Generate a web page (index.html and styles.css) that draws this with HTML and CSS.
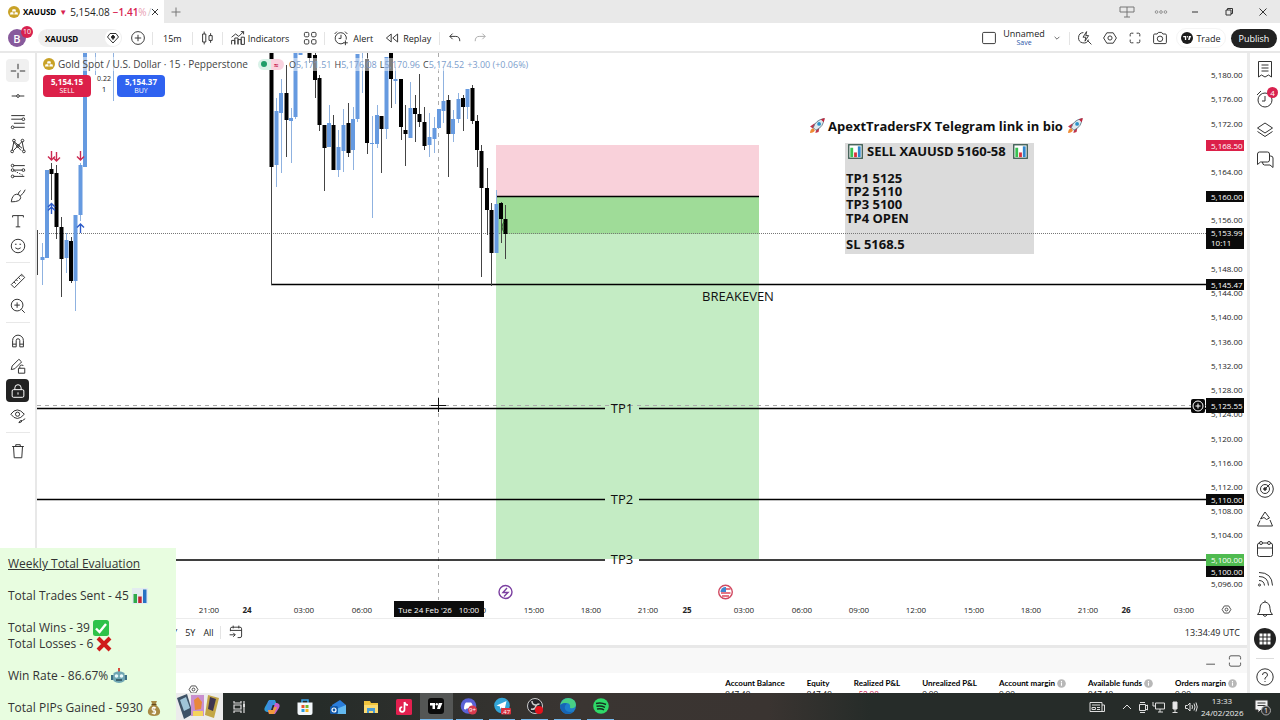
FILE: index.html
```html
<!DOCTYPE html>
<html lang="en">
<head>
<meta charset="utf-8">
<title>XAUUSD 5,154.08</title>
<link rel="stylesheet" href="styles.css">
</head>
<body>
<svg class="defs" aria-hidden="true">
  <defs>
    <symbol id="gold" viewBox="0 0 12 12"><circle cx="6" cy="6" r="6" fill="#c9a227"/><path d="M4.6 3.2h2.8l.7 2.2H3.9zM2.6 6.2h2.6l.6 2.2H1.9zM6.8 6.2h2.6l.7 2.2H6.200z" fill="#fff"/></symbol>
    <symbol id="gear" viewBox="0 0 20 20"><path d="M6 3.500h8l4 6.500-4 6.500H6L2 10z"/><circle cx="10" cy="10" r="2.600"/></symbol>
    <symbol id="full" viewBox="0 0 20 20"><path d="M4 8V5.500Q4 4 5.500 4H8M12 4h2.500Q16 4 16 5.500V8M16 12v2.500q0 1.500-1.500 1.500H12M8 16H5.500Q4 16 4 14.500V12"/></symbol>
    <symbol id="rocket" viewBox="0 0 16 16"><path d="M1 9l4-3 2 1-3 4zM10 9l-1 5-3 1 1-4z" fill="#c2334b"/><path d="M4 10Q6 3 14 1.500 14 9 6.500 12.500z" fill="#dfe9ef" stroke="#54707f" stroke-width=".8"/><path d="M11 2.200L15 1l-1.200 4z" fill="#c2253c"/><circle cx="9.500" cy="6.500" r="1.800" fill="#2b92c9"/><path d="M1 15q0-4 3-4.500l1.500 2Q4.500 15 1 15z" fill="#ef8a32"/></symbol>
    <symbol id="bars" viewBox="0 0 16 16"><rect x=".8" y=".8" width="14.400" height="14.400" fill="#fff" stroke="#3a5a50" stroke-width="1.400"/><path d="M2.500 4h3v10h-3z" fill="#39c253"/><path d="M6.500 9h3v5h-3z" fill="#d9323c"/><path d="M10.500 2.500h3V14h-3z" fill="#2f86cd"/></symbol>
    <symbol id="info" viewBox="0 0 10 10"><circle cx="5" cy="5" r="4.800" fill="#b8b8b8"/><path d="M4.400 4.300h1.200v3.200H4.400zM4.400 2.300h1.200v1.200H4.400z" fill="#fff"/></symbol>
  </defs>
</svg>
<div class="app">
  <header class="tabs">
    <div class="tab">
      <svg class="s12"><use href="#gold"/></svg>
      <b>XAUUSD</b><span class="down">▼</span><span>5,154.08</span><span class="pct">−1.41<i>%</i></span><span class="slash">/</span>
      <button class="x" aria-label="Close tab"><svg viewBox="0 0 8 8"><path d="M1 1l6 6M7 1L1 7"/></svg></button>
    </div>
    <button class="newtab" aria-label="New tab"><svg viewBox="0 0 10 10"><path d="M5 .5v9M.5 5h9"/></svg></button>
    <div class="win">
      <button aria-label="Layout"><svg viewBox="0 0 18 14"><path d="M2 2h14v5H2zM9 2v10M6 12h6" stroke="#777"/></svg></button>
      <button class="more" aria-label="More"><svg viewBox="0 0 18 14"><circle cx="4" cy="7" r="1.500"/><circle cx="9" cy="7" r="1.500"/><circle cx="14" cy="7" r="1.500"/></svg></button>
      <button aria-label="Minimize"><svg viewBox="0 0 18 14"><path d="M6 7h6"/></svg></button>
      <button aria-label="Restore"><svg viewBox="0 0 18 14"><path d="M6 5h5v5H6zM7.500 5V3.500h5v5H11"/></svg></button>
      <button aria-label="Close"><svg viewBox="0 0 18 14"><path d="M5.500 3.500l7 7M12.500 3.500l-7 7"/></svg></button>
    </div>
  </header>

  <nav class="toolbar">
    <button class="avatar" aria-label="Profile">B<em>10</em></button>
    <button class="symbol"><b>XAUUSD</b><span class="gem"><svg viewBox="0 0 16 16"><path d="M5 3.500h6L13.500 7 8 13 2.500 7z"/><path d="M8 5l1.800 2L8 9.500 6.200 7z" fill="#222"/></svg></span></button>
    <button class="ib" aria-label="Compare"><svg viewBox="0 0 20 20"><circle cx="10" cy="10" r="8"/><path d="M10 6v8M6 10h8"/></svg></button>
    <i class="vs"></i>
    <button class="tx">15m</button>
    <i class="vs"></i>
    <button class="ib" aria-label="Candles"><svg viewBox="0 0 20 20"><path d="M4.500 5h4v10h-4zM6.500 2v3M6.500 15v3M12.500 7h4v6h-4zM14.500 4v3M14.500 13v3"/></svg></button>
    <i class="vs"></i>
    <button class="tx wide"><svg viewBox="0 0 20 20"><path d="M2 9l5-4 4 3 6-6M13.500 2H17v3.500M2 18v-5h4v5M6 18v-8h4v8M10 18v-6h4v6M14 18V9h4v9z"/></svg>Indicators</button>
    <button class="ib" aria-label="Templates"><svg viewBox="0 0 20 20"><rect x="3" y="3" width="5.500" height="5.500" rx="1.500"/><rect x="12" y="3" width="5.500" height="5.500" rx="1.500"/><rect x="3" y="12" width="5.500" height="5.500" rx="1.500"/><rect x="12" y="12" width="5.500" height="5.500" rx="1.500"/></svg></button>
    <i class="vs"></i>
    <button class="tx alert"><svg viewBox="0 0 20 20"><path d="M13 16.500A7 7 0 1 1 16.500 12M10 6v4.500H7M2 5l3-3M15 2l3 3M15.500 13v6M12.500 16h6"/></svg>Alert</button>
    <button class="tx replay"><svg viewBox="0 0 20 20"><path d="M9 5L3 10l6 5zM17 5l-6 5 6 5z"/></svg>Replay</button>
    <i class="vs"></i>
    <button class="ib" aria-label="Undo"><svg viewBox="0 0 20 20"><path d="M7 4.500L3.500 8 7 11.500M3.500 8H11q5 0 5 6"/></svg></button>
    <button class="ib dim" aria-label="Redo"><svg viewBox="0 0 20 20"><path d="M13 4.500L16.500 8 13 11.500M16.500 8H9q-5 0-5 6"/></svg></button>
    <span class="grow"></span>
    <button class="ib" aria-label="Layout setup"><svg viewBox="0 0 20 20"><rect x="2" y="3" width="16" height="14" rx="1.500"/></svg></button>
    <button class="layout"><span>Unnamed</span><small>Save</small></button>
    <button class="ib caret" aria-label="Layouts"><svg viewBox="0 0 20 20"><path d="M6 8l4 4 4-4"/></svg></button>
    <i class="vs"></i>
    <button class="ib" aria-label="Quick search"><svg viewBox="0 0 20 20"><path d="M8 3.200A6.500 6.500 0 1 0 14.500 12M13 13l5 5M12 2L7.500 9H11l-1 5 4.500-7H11z"/></svg></button>
    <button class="ib" aria-label="Settings"><svg><use href="#gear"/></svg></button>
    <button class="ib" aria-label="Fullscreen"><svg><use href="#full"/></svg></button>
    <button class="ib" aria-label="Snapshot"><svg viewBox="0 0 20 20"><path d="M3.500 5h3L8 3h4l1.500 2h3q1.500 0 1.500 1.500v9q0 1.500-1.500 1.500h-13Q2 17 2 15.500v-9Q2 5 3.500 5z"/><circle cx="10" cy="11" r="3.400"/></svg></button>
    <button class="trade"><svg viewBox="0 0 12 12"><circle cx="6" cy="6" r="6" fill="#1c1c1c"/><path d="M2.200 4h3v4H3.900V5.300H2.200zM8 4h2.200L8.600 8H7.100z" fill="#fff"/><circle cx="6.500" cy="4.700" r=".7" fill="#fff"/></svg>Trade</button>
    <button class="publish">Publish</button>
  </nav>

  <div class="body">
    <aside class="tools">
      <button class="on" aria-label="Cross"><svg viewBox="0 0 20 20"><path d="M10 2v6M10 12v6M2 10h6M12 10h6"/></svg></button>
      <button aria-label="Trend line"><svg viewBox="0 0 20 20"><path d="M3 10h5.500M11.500 10H17"/><circle cx="10" cy="10" r="1.500"/></svg></button>
      <button aria-label="Fib"><svg viewBox="0 0 20 20"><path d="M2.500 4h15M2.500 8h12M5.500 12.500h12M5.500 17h12"/><circle cx="16" cy="8" r="1.500"/><circle cx="4" cy="17" r="1.500"/></svg></button>
      <button aria-label="Patterns"><svg viewBox="0 0 20 20"><path d="M3.500 15L5.500 5l9 7.500M5 15l9.500-10 2 10M5.500 6l8 9"/><circle cx="3.500" cy="16" r="1.500"/><circle cx="5.500" cy="4" r="1.500"/><circle cx="10" cy="10" r="1.500"/><circle cx="15" cy="4" r="1.500"/><circle cx="16.500" cy="16" r="1.500"/></svg></button>
      <button aria-label="Forecast"><svg viewBox="0 0 20 20"><path d="M5 4h12.500M5 9h10M5 16h12"/><path d="M6 10l10 5" stroke-dasharray="1.500 1.500"/><circle cx="4" cy="4" r="1.500"/><circle cx="4" cy="9" r="1.500"/><circle cx="16" cy="9" r="1.500"/><circle cx="4" cy="16" r="1.500"/></svg></button>
      <button aria-label="Brush"><svg viewBox="0 0 20 20"><path d="M2.500 16.500q1-8 6-8.500 4 0 4.500 3.500 0 5-10.500 5zM10 8q1-3 3-4M12.500 10q4-3 5.500-7"/></svg></button>
      <button aria-label="Text"><svg viewBox="0 0 20 20"><path d="M4 6V4h12v2M10 4v12.500M7.500 16.500h5"/></svg></button>
      <button aria-label="Emoji"><svg viewBox="0 0 20 20"><circle cx="10" cy="10" r="7.500"/><path d="M7 12q3 3 6 0"/><path d="M7.500 7.500v1M12.500 7.500v1" stroke-width="1.800"/></svg></button>
      <i></i>
      <button aria-label="Measure"><svg viewBox="0 0 20 20"><path d="M2.500 14L14 2.500l3.500 3.500L6 17.500zM5.500 11l2 2M8 8.500l1.500 1.500M10.500 6l2 2M13 3.500l1.500 1.500"/></svg></button>
      <button aria-label="Zoom in"><svg viewBox="0 0 20 20"><circle cx="9" cy="9" r="6.500"/><path d="M14 14l3.500 3.500M9 6v6M6 9h6"/></svg></button>
      <i></i>
      <button aria-label="Magnet"><svg viewBox="0 0 20 20"><path d="M4 16.500V9.500a6 6 0 0 1 12 0v7h-4V9.500a2 2 0 0 0-4 0v7zM4 13.500h4M12 13.500h4"/></svg></button>
      <button aria-label="Stay in drawing mode"><svg viewBox="0 0 20 20"><path d="M2.500 14l1-4L11 2.500 14 5.500 6.500 13zM10.500 12.500h7V18h-7zM12 12.500v-2q0-1.500 2-1.500t2 1"/></svg></button>
      <button class="lock" aria-label="Lock drawings"><svg viewBox="0 0 20 20"><rect x="3.500" y="8.500" width="13" height="8.500" rx="1.500"/><path d="M6.500 8.500V6.500a3.500 3.500 0 0 1 7 0v2M10 11.500v2.500"/></svg></button>
      <button aria-label="Hide drawings"><svg viewBox="0 0 20 20"><path d="M2 8q7-9.500 15 0-8 9.500-15 0z"/><circle cx="9.500" cy="8" r="2.300"/><path d="M11 17.500q1-3 3.500-2.500 0 2-3.500 2.500zM15 15l3-2"/></svg></button>
      <i></i>
      <button aria-label="Remove"><svg viewBox="0 0 20 20"><path d="M3.500 5h13M7.500 5V3h5v2M5 5l.8 12.500h8.400L15 5"/></svg></button>
    </aside>

    <main class="center">
      <section class="chart">
        <div class="plot">
          <svg class="canvas">
            <g transform="translate(-37 -53)">
              <g class="area">
                <path fill="#f9d1da" d="M496 145h263v52H496z"/>
                <path fill="#9fdc98" d="M496 197h263v37H496z"/>
                <path fill="#c4ecc4" d="M496 234h263v325H496z"/>
                <path fill="#dbdbdb" d="M845 143h189v111H845z"/>
              </g>
              <path class="hair" d="M438.500 53V600M37 405.500H4000"/>
              <path class="dot" d="M37 233.500H4000"/>
              <path class="lvl" d="M271 284.500H4000M37 408.500H605M639 408.500H4000M37 499.500H605M639 499.500H4000M37 560H605M639 560H4000M496 196.500H759"/>
              <path class="bw" d="M42.500 243V285M66.500 233V273M75.500 215V311M80.500 163V221M95.500 53V75M113.500 53V101M276.500 98V187M281.500 79V173M291.500 108V163M295.500 53V119M329.500 105V147M338.500 130V177M343.500 109V172M353.500 107V170M357.500 54V122M362.500 53V93M372.500 116V218M377.500 105V148M386.500 57V139M395.500 67V104M410.500 82V138M429.500 113V157M434.500 117V153M443.500 67V123M453.500 110V142M458.500 93V123M467.500 89V119M496.500 190V253"/>
              <path class="bb" d="M42.500 257V260M47 170V258M66.500 240V258M75.500 215V281M80.500 165V215M85 53V167M276.500 111V165M281 93V113M291 118V121M295.500 53V117M300.500 53V55M329 123V147M338.500 147V170M343.500 125V151M353 119V150M357.500 54V119M372 143V144M377 115V144M386.500 57V129M395.500 79V81M410.500 108V138M429.500 137V145M434.500 128V139M439 109V128M443.500 101V111M453 119V134M458.500 99V119M467.500 89V107M496.500 204V253"/>
              <path class="kw" d="M37.500 230V275M51.500 163V200M56.500 165V239M61.500 217V297M71.500 237V283M271.500 53V285M286.500 65V157M309.500 53V63M315.500 53V98M319.500 75V131M324.500 125V191M333.500 115V170M348.500 103V157M367.500 53V154M381.500 116V173M391.500 53V108M401.500 79V140M405.500 105V166M415.500 95V142M419.500 74V127M424.500 107V150M448.500 95V177M463.500 95V131M472.500 85V124M477.500 115V167M481.500 145V277M487.500 168V235M491.500 203V286M501.500 202V243M505.500 205V259"/>
              <path class="kb" d="M51.500 169V174M56.500 173V227M61.500 227V259M71 241V281M271.500 53V167M286.500 93V120M309.500 53V58M315 55V80M319.500 78V125M324.500 125V148M333.500 125V170M348.500 123V153M367 59V143M381.500 116V129M391 53V79M401 79V127M405.500 130V134M415 108V114M419.500 114V122M424.500 122V146M448.500 100V134M463 98V107M472.500 88V121M477 121V150M481.500 151V188M487 188V210M491.500 210V253M501 203V219M505.500 219V234"/>
              <path class="red" d="M51.500 151v9M48 156.500l3.500 3.500 3.500-3.500M56.500 152v9M53 157.500l3.500 3.500 3.500-3.500M80.500 151v9M77 156.500l3.500 3.500 3.500-3.500"/>
              <path class="blue" d="M51.500 214v-10M48 207l3.500-3.500L55 207M48 210.500l3.500-3.500 3.500 3.500M80.500 233v-9M77 227.500l3.500-3.500 3.500 3.500"/>
              <path class="green" d="M504 222q-4 5 0 10"/>
              <path class="cross" d="M438.500 398v14M431 405.500h15"/>
              <g class="note">
                <svg x="809" y="117" width="17" height="17"><use href="#rocket"/></svg>
                <text x="828" y="131">ApextTradersFX Telegram link in bio</text>
                <svg x="1067" y="117" width="17" height="17"><use href="#rocket"/></svg>
                <svg x="848" y="144" width="15" height="15"><use href="#bars"/></svg>
                <text x="867" y="156">SELL XAUUSD 5160-58</text>
                <svg x="1013" y="144" width="15" height="15"><use href="#bars"/></svg>
                <text x="846" y="183">TP1 5125</text>
                <text x="846" y="196">TP2 5110</text>
                <text x="846" y="209">TP3 5100</text>
                <text x="846" y="223">TP4 OPEN</text>
                <text x="846" y="249">SL 5168.5</text>
              </g>
              <g class="lab">
                <text x="738" y="301">BREAKEVEN</text>
                <text x="622" y="413">TP1</text>
                <text x="622" y="504">TP2</text>
                <text x="622" y="564">TP3</text>
              </g>
              <circle cx="505.500" cy="592" r="6.500" fill="#fff" stroke="#7b3fa0" stroke-width="1.400"/>
              <path d="M507 588l-4 4.500h5l-4 4" fill="none" stroke="#7b3fa0" stroke-width="1.400"/>
              <circle cx="725.500" cy="592" r="6.800" fill="#fff" stroke="#d04a62" stroke-width="1.400"/>
              <path d="M726 589h4.500M721 593h9.500M722 596h7" stroke="#dc4b5e" stroke-width="1.600"/>
              <path d="M720.500 592a5 5 0 0 1 5.500-5v5z" fill="#3e86d0" stroke="none"/>
            </g>
          </svg>
          <div class="legend">
            <div class="title">
              <svg class="s12"><use href="#gold"/></svg><span class="name">Gold Spot / U.S. Dollar · 15 · Pepperstone</span>
              <span class="st"><i></i><b>≈</b></span>
              <span class="ohlc"><span>O<u>5,171.51</u></span><span>H<u>5,176.08</u></span><span>L<u>5,170.96</u></span><span>C<u>5,174.52</u></span><u>+3.00 (+0.06%)</u></span>
            </div>
            <div class="deal">
              <button class="sell"><b>5,154.15</b>SELL</button>
              <span class="spread"><small>0.22</small>1</span>
              <button class="buy"><b>5,154.37</b>BUY</button>
            </div>
          </div>
        </div>
        <div class="prices">
          <div class="scale">
            <span>5,180.00</span><span>5,176.00</span><span>5,172.00</span><span></span><span>5,164.00</span><span></span><span>5,156.00</span><span></span><span>5,148.00</span><span>5,144.00</span><span>5,140.00</span><span>5,136.00</span><span>5,132.00</span><span>5,128.00</span><span>5,124.00</span><span>5,120.00</span><span>5,116.00</span><span>5,112.00</span><span>5,108.00</span><span>5,104.00</span><span></span><span>5,096.00</span>
          </div>
          <span class="chip c1">5,168.50</span>
          <span class="chip c2">5,160.00</span>
          <span class="chip c3">5,153.99<br>10:11</span>
          <span class="chip c4">5,145.47</span>
          <span class="chip c5">5,125.55</span>
          <button class="addp" aria-label="Add at price"><svg viewBox="0 0 12 12"><circle cx="6" cy="6" r="5"/><path d="M6 3.500v5M3.500 6h5"/></svg></button>
          <span class="chip c6">5,110.00</span>
          <span class="chip c7">5,100.00</span>
          <span class="chip c8">5,100.00</span>
        </div>
      </section>
      <div class="times">
        <svg class="canvas">
          <g transform="translate(-37 0)">
            <text x="209" y="16">21:00</text><text class="d" x="247" y="16">24</text><text x="304" y="16">03:00</text><text x="362" y="16">06:00</text><text x="476" y="16">12:00</text><text x="534" y="16">15:00</text><text x="591" y="16">18:00</text><text x="648" y="16">21:00</text><text class="d" x="687" y="16">25</text><text x="744" y="16">03:00</text><text x="802" y="16">06:00</text><text x="859" y="16">09:00</text><text x="916" y="16">12:00</text><text x="974" y="16">15:00</text><text x="1031" y="16">18:00</text><text x="1088" y="16">21:00</text><text class="d" x="1126" y="16">26</text><text x="1184" y="16">03:00</text>
            <path d="M394 4h90v16h-90z" fill="#0c0c0c" stroke="none"/>
            <text class="w" x="425" y="16">Tue 24 Feb '26</text><text class="w" x="469" y="16">10:00</text>
          </g>
        </svg>
        <button aria-label="Axis settings"><svg><use href="#gear"/></svg></button>
      </div>
      <div class="ranges">
        <button>1Y</button><button>5Y</button><button>All</button><i class="vs"></i>
        <button class="cal" aria-label="Go to date"><svg viewBox="0 0 20 20"><path d="M3 9V6q0-2 2-2h10q2 0 2 2v9q0 2-2 2h-3M3 8h14M6.500 2v3.500M13.500 2v3.500M2 13.500h7M6.500 11l2.500 2.500L6.500 16"/></svg></button>
        <span class="clock">13:34:49 UTC</span>
      </div>
      <section class="panel">
        <div class="phead">
          <button aria-label="Minimize panel"><svg viewBox="0 0 20 20"><path d="M4 14h11"/></svg></button>
          <button aria-label="Maximize panel"><svg viewBox="0 0 20 20"><path d="M3 8V5.500Q3 3.500 5 3.500h10q2 0 2 2V8M3 12v2.500q0 2 2 2h10q2 0 2-2V12"/></svg></button>
        </div>
        <div class="pbody">
          <button class="pset" aria-label="Panel settings"><svg><use href="#gear"/></svg></button>
          <table>
            <thead><tr><th>Account Balance</th><th>Equity</th><th>Realized P&amp;L</th><th>Unrealized P&amp;L</th><th>Account margin <svg><use href="#info"/></svg></th><th>Available funds <svg><use href="#info"/></svg></th><th>Orders margin <svg><use href="#info"/></svg></th></tr></thead>
            <tbody><tr><td>947.49</td><td>947.49</td><td class="neg">−52.08</td><td>0.00</td><td>0.00</td><td>947.49</td><td>0.00</td></tr></tbody>
          </table>
        </div>
      </section>
    </main>

    <aside class="side">
      <button aria-label="Watchlist"><svg viewBox="0 0 20 20"><path d="M3.500 2.500h13V18l-3-2-3.500 2-3.500-2-3 2zM6.500 6h7M6.500 9h7M6.500 12h7"/></svg></button>
      <button aria-label="Alerts"><svg viewBox="0 0 20 20"><circle cx="10" cy="11" r="7"/><path d="M10 7v5H7M2 6l4-4"/></svg><em>4</em></button>
      <button aria-label="Object tree"><svg viewBox="0 0 20 20"><path d="M10 4l7.500 5-7.500 5-7.500-5zM2.500 12.500l7.500 5 7.500-5"/></svg></button>
      <button aria-label="Chats"><svg viewBox="0 0 20 20"><path d="M2.500 15.500V5q0-2 2-2h8q2 0 2 2v6q0 2-2 2H5.500zM14.500 7h1q2.500 0 2.500 2v9.500L15 16H9.500q-2 0-2-3"/></svg></button>
      <span class="grow"></span>
      <button aria-label="Screeners"><svg viewBox="0 0 20 20"><circle cx="10" cy="10" r="8.300"/><circle cx="10" cy="10" r="4.500"/><circle cx="10" cy="10" r="1.300" fill="#222"/><path d="M10 10l5.500-5.500"/></svg></button>
      <button aria-label="Pine"><svg viewBox="0 0 20 20"><path d="M10 3l4.500 6-3 1.500L9 8.500 5.500 10zM5 11.500L2.500 17h15L15 11"/></svg></button>
      <button aria-label="Calendar"><svg viewBox="0 0 20 20"><rect x="2.500" y="4" width="15" height="13.500" rx="2"/><path d="M2.500 9h15"/><circle cx="6" cy="4" r="1.500" fill="#fff"/><circle cx="14" cy="4" r="1.500" fill="#fff"/></svg></button>
      <button aria-label="News"><svg viewBox="0 0 20 20"><path d="M4 3.500q13 0 13.500 13M4 7.500q9 0 9.500 9M4 11.500q5 0 5.500 5"/><circle cx="4.500" cy="16" r="1"/></svg></button>
      <button aria-label="Notifications"><svg viewBox="0 0 20 20"><path d="M2.500 15.500h15q-2.500-2-2.500-6Q15 4 10 3 5 4 5 9.500q0 4-2.500 6zM8 16q2 3 4 0M10 3V1.500"/></svg></button>
      <button class="apps" aria-label="Apps"><svg viewBox="0 0 22 22"><circle cx="11" cy="11" r="11"/><path d="M5.500 5.500h3v3h-3zM9.500 5.500h3v3h-3zM13.500 5.500h3v3h-3zM5.500 9.500h3v3h-3zM9.500 9.500h3v3h-3zM13.500 9.500h3v3h-3zM5.500 13.500h3v3h-3zM9.500 13.500h3v3h-3zM13.500 13.500h3v3h-3z"/></svg></button>
      <i></i>
      <button aria-label="Help"><svg viewBox="0 0 20 20"><circle cx="10" cy="10" r="8.200"/><path d="M7.500 8q0-2.500 2.500-2.500T12.500 8q0 1.500-2.500 3v1.500M10 14v1"/></svg></button>
    </aside>
  </div>

  <footer class="taskbar">
    <svg class="cards" viewBox="0 0 48 27"><path fill="#ececec" d="M0 0h48v27H0z"/><path d="M2 5l10-4 6 20-9 5z" fill="#3e5266"/><path d="M5 7l6-3 4 11-6 3z" fill="#9fc4d8"/><path d="M16 2h13v21H16z" fill="#c98fce"/><path d="M18 18h10v5H18z" fill="#f4d35e"/><path d="M19 7l4-3 4 5-1 7-6 1z" fill="#e8883a"/><path d="M33 2l11 3-5 20-9-3z" fill="#c3a647"/><path d="M35 4l6 2-3 12-5-2z" fill="#3f3550"/></svg>
    <div class="icons">
      <button aria-label="Task view"><svg viewBox="0 0 18 18"><path d="M4 3v2h7V3M4 15v-2h7v2M4 7h7v4H4zM14 3v12" fill="none" stroke="#ddd" stroke-width="1.200"/><path d="M13 6h2v3h-2z" fill="#ddd"/></svg></button>
      <button aria-label="Copilot"><svg viewBox="0 0 18 18"><path d="M6 2h6l2 5H8L6 14H4Q0 13 2 9z" fill="#2f9bd8"/><path d="M5 3h6l-3 9H4z" fill="#3f8be0"/><path d="M12 16H6l-1-4h5l2-7h2q4 1 2 5z" fill="#c660c8"/><path d="M11 16H6l-1-4h5l1-3h3z" fill="#f09a3e"/></svg></button>
      <button aria-label="Store"><svg viewBox="0 0 18 18"><path d="M6 5V2h6v3" fill="none" stroke="#3aa3e8" stroke-width="1.500"/><path d="M1.500 4.500h15V15q0 2-2 2h-11q-2 0-2-2z" fill="#f3f8fb"/><path d="M5.500 7h3v3h-3z" fill="#e8542f"/><path d="M9.500 7h3v3h-3z" fill="#74b72e"/><path d="M5.500 11h3v3h-3z" fill="#2a9de0"/><path d="M9.500 11h3v3h-3z" fill="#f6b51e"/></svg></button>
      <button aria-label="Outlook"><svg viewBox="0 0 18 18"><path d="M3 7l8-5 6 5v9H5z" fill="#2a7ddb"/><path d="M5 12l12-5v9H5z" fill="#63b9f0"/><rect x="1" y="8" width="8" height="8" rx="1.500" fill="#1359a8"/><circle cx="5" cy="12" r="2" fill="none" stroke="#fff" stroke-width="1.200"/></svg></button>
      <button aria-label="File Explorer"><svg viewBox="0 0 18 18"><path d="M2 3h6l1 2h7v10H2z" fill="#f0c33c"/><path d="M2 7h14v8H2z" fill="#fadb72"/><path d="M5 15v-5h8v5h-2v-2H7v2z" fill="#4a9cd6"/></svg></button>
      <button aria-label="TikTok"><svg viewBox="0 0 18 18"><rect x="1" y="1" width="16" height="16" rx="1.500" fill="#e3204f"/><path d="M9.500 4v7.500A2.300 2.300 0 1 1 7.200 9.200M9.500 4q.5 3 3.500 3" fill="none" stroke="#fff" stroke-width="1.700"/></svg></button>
      <button class="act" aria-label="TradingView"><svg viewBox="0 0 18 18"><rect x="1" y="1" width="16" height="16" rx="3" fill="#0b0b0b"/><path d="M3 6h5v6H5.500V8.500H3zM11.800 6h3.600L13 12h-3z" fill="#fff"/><circle cx="9.800" cy="7.200" r="1.200" fill="#fff"/></svg></button>
      <button class="run" aria-label="Discord"><svg viewBox="0 0 18 18"><circle cx="8.500" cy="9" r="7.800" fill="#5b62d6"/><path d="M4 12q0-5 2-6.500h5q2 1.500 2 6.500-2 1-2.500-.5h-4Q6 13 4 12z" fill="#fff"/><circle cx="12.500" cy="13" r="4.500" fill="#d83a4e"/><text x="12.500" y="15">9+</text></svg></button>
      <button class="run" aria-label="Telegram"><svg viewBox="0 0 18 18"><circle cx="9" cy="8.500" r="7.800" fill="#33a5d8"/><path d="M3.500 8.500L13.500 4l-2 9-3-2.500-1.500 1.500V9.500z" fill="#fff"/><rect x="8" y="11" width="10" height="6.500" rx="1" fill="#d8323f"/><text x="13" y="16.500">.47</text></svg></button>
      <button class="run" aria-label="OBS"><svg viewBox="0 0 18 18"><circle cx="9" cy="9" r="7.500" fill="#26252a" stroke="#ccc"/><path d="M6 4q0 4 4 4M13.500 7q-4 0-4 4M5 12q4 1 5-3" fill="none" stroke="#ccc" stroke-width="1.500"/><circle cx="13" cy="13" r="4" fill="#e4121c"/></svg></button>
      <button class="run" aria-label="Edge"><svg viewBox="0 0 18 18"><circle cx="9" cy="9" r="8" fill="#1d7fcb"/><path d="M1.200 8Q3 1 9.500 1 17 2 17 8q-1 4-6 3 1-5-4-5-4 0-5.800 2z" fill="#48cf86"/><path d="M1.200 8Q5 5 8 6.500q-3 2-2 5.500 2 4 8 2.500-4 4-9 1.500Q.5 13 1.200 8z" fill="#1764b4"/></svg></button>
      <button class="run" aria-label="Spotify"><svg viewBox="0 0 18 18"><circle cx="9" cy="9" r="7.800" fill="#2fd968"/><path d="M4 6.500q5-1.500 10 1M4.500 9.300q4.500-1 8.500 1M5 12q4-1 7 .8" fill="none" stroke="#14301f" stroke-width="1.500"/></svg></button>
    </div>
    <span class="grow"></span>
    <button class="news" aria-label="News"><svg viewBox="0 0 18 14"><path d="M2 2.500h12v9H2zM14 5h2.500v6.500H14M4 5h8M4 7.500h3.500v2H4zM9 7.500h3M9 9.500h3"/></svg></button>
    <div class="tray">
      <svg viewBox="0 0 14 14"><path d="M3 9l4-4 4 4"/></svg>
      <svg viewBox="0 0 14 14"><path d="M3.500 4.500h6v6h-6zM9.500 6l2-1v5l-2-1M4 2.500h5M4 12.500h5"/></svg>
      <svg viewBox="0 0 14 14"><path d="M3.500 3h9v6h-9zM6 12h5M8 9v3M1 2v4h2"/></svg>
      <svg viewBox="0 0 14 14"><path d="M5 2h4v7H5z" fill="#e8e8e8"/><path d="M7 9v4M4.500 12.500h5"/></svg>
      <svg viewBox="0 0 14 14"><path d="M1.500 5.500h2L6 3v8L3.500 8.500h-2zM8 5q1 2 0 4M10 3.500q2 3.500 0 7M12 2.500q2.500 4.500 0 9"/></svg>
    </div>
    <div class="date">13:33<br>24/02/2026</div>
    <button class="notif" aria-label="Notifications"><svg viewBox="0 0 20 20"><path d="M3 3h13v10H9l-3 3v-3H3z" fill="#f2f2f2"/><path d="M5.500 6h8M5.500 8.500h8" stroke="#333"/><circle cx="14" cy="13.500" r="4.500" fill="#333" stroke="#aaa"/><text x="14" y="16">1</text></svg></button>
  </footer>

  <section class="stats">
    <h1>Weekly Total Evaluation</h1>
    <p>Total Trades Sent - 45 <svg viewBox="0 0 16 16"><path d="M0 0h16v16H0z" fill="#e3ecf0"/><path d="M1.500 6h3.500v9H1.500z" fill="#2faa4a"/><path d="M6.200 8.500h3.500V15H6.200z" fill="#c42534"/><path d="M11 1.500h3.500V15H11z" fill="#2672c4"/></svg></p>
    <p>Total Wins - 39 <svg viewBox="0 0 16 16"><rect width="16" height="16" rx="2.500" fill="#2ec24a"/><path d="M3 8.500L6.500 12 13 4" fill="none" stroke="#fff" stroke-width="2.400"/></svg><br>Total Losses - 6 <svg viewBox="0 0 16 16"><path d="M2 2l12 12M14 2L2 14" stroke="#cf1b1b" stroke-width="4"/></svg></p>
    <p>Win Rate - 86.67% <svg viewBox="0 0 16 16"><path d="M8 0v4" stroke="#d84b3c" stroke-width="2"/><path d="M2.500 5q5.500-3.500 11 0v8q-5.500 4-11 0z" fill="#6fa6b3"/><path d="M0 7h2.500v5H0zM13.500 7H16v5h-2.500z" fill="#3b6f86"/><circle cx="5.500" cy="8" r="1.800" fill="#e9f8fb"/><circle cx="10.500" cy="8" r="1.800" fill="#e9f8fb"/><path d="M5 12h6" stroke="#294b58" stroke-width="1.500"/></svg></p>
    <p>Total PIPs Gained - 5930 <svg viewBox="0 0 16 16"><path d="M5 1h6l-1.500 3.500Q15 9 14 13q-1 3-6 3t-6-3q-1-4 4.500-8.500z" fill="#a98a45"/><path d="M5.500 4.500h5" stroke="#64491c" stroke-width="1.300"/><path d="M10 8q-3.500-1.500-3.800.5T8 10.500t1.500 2.200-3.700.2M8 6.500v8" fill="none" stroke="#fff" stroke-width="1.100"/></svg></p>
  </section>
</div>
</body>
</html>
```
FILE: styles.css
```css
* { box-sizing: border-box; }
body { margin: 0; font-family: "Open Sans", "Noto Sans", sans-serif; font-size: 10px; color: #222; background: #fff; }
button { font: inherit; color: inherit; border: 0; background: none; padding: 0; margin: 0; display: flex; align-items: center; justify-content: center; flex: none; }
svg { fill: none; stroke: #333; stroke-width: 1; flex: none; display: block; }
i, em { font-style: normal; }
.defs { position: absolute; width: 0; height: 0; }
.grow { flex: 1; }
.s12 { width: 12px; height: 12px; stroke: none; }
.app { position: relative; display: flex; flex-direction: column; height: 100vh; overflow: hidden; }

/* Window tabs */
.tabs { display: flex; flex: none; height: 23px; background: #e9e9e9; }
.tab { display: flex; align-items: center; width: 164px; padding-left: 8px; background: #fff; white-space: nowrap; }
.tab b { font-size: 8px; margin: 0 3px; color: #000; }
.tab .down { font-size: 8px; color: #d8224f; margin-right: 3px; }
.tab .pct { color: #d8224f; font-weight: 600; margin-left: 3px; }
.tab .pct i { color: #e9a0b2; font-weight: 400; }
.tab .slash { color: #ccc; margin-left: 1px; }
.tab .x { margin: 0 5px 0 auto; }
.x svg { width: 8px; height: 8px; }
.newtab { width: 24px; }
.newtab svg { width: 10px; height: 10px; stroke: #777; }
.win { display: flex; margin-left: auto; }
.win button { width: 34px; }
.win svg { width: 18px; height: 14px; }
.win .more svg { stroke: #888; width: 16px; }

/* Top toolbar */
.toolbar { display: flex; align-items: center; flex: none; height: 30px; border-bottom: 2px solid #e8e8e8; padding: 2px 3px 0 8px; white-space: nowrap; }
.vs { width: 1px; height: 13px; background: #e4e4e4; flex: none; }
.avatar { position: relative; width: 18px; height: 18px; border-radius: 9px; background: #875a9c; color: #fff; font-size: 11px; font-weight: 600; margin-right: 12px; }
.avatar em { position: absolute; left: 13px; top: -3px; width: 12px; height: 12px; border-radius: 6px; background: #d8224f; font-size: 7px; font-weight: 400; line-height: 12px; text-align: center; }
.symbol { width: 84px; height: 18px; border-radius: 9px; background: #efefef; justify-content: space-between; padding: 0 1px 0 7px; margin-right: 3px; }
.symbol b { font-size: 8px; color: #000; }
.gem { width: 16px; height: 16px; border-radius: 8px; background: #fff; }
.gem svg { width: 16px; height: 16px; }
.ib { width: 25px; height: 24px; }
.ib svg, .tx svg { width: 16px; height: 16px; stroke-width: 1.2; }
.dim svg { stroke: #aaa; }
.tx { height: 24px; padding: 0 10px; gap: 2px; font-size: 9px; }
.ib + .vs { margin-left: 2px; }
.vs + .ib { margin-left: 2px; }
.tx.wide { padding: 0 8px 0 7px; }
.tx.alert { padding: 0 6px 0 8px; gap: 4px; }
.tx.replay { padding: 0 8px 0 5px; gap: 3px; }
.layout { flex-direction: column; width: 46px; font-size: 9px; line-height: 10px; }
.layout small { font-size: 7px; line-height: 8px; color: #2a56a8; }
.caret { width: 20px; }
.caret svg { width: 12px; height: 12px; }
.trade { width: 50px; height: 20px; gap: 3px; margin: 0 5px 0 4px; border: 1px solid #f4f4f4; border-radius: 10px; font-size: 9px; }
.trade svg { width: 12px; height: 12px; stroke: none; }
.publish { width: 46px; height: 19px; border-radius: 10px; background: #222; color: #fff; font-size: 9px; }

/* Body */
.body { display: flex; flex: 1; min-height: 0; }
.tools { display: flex; flex-direction: column; align-items: center; gap: 2px; width: 37px; padding-top: 6px; border-right: 2px solid #e8e8e8; }
.tools button { width: 23px; height: 23px; border-radius: 4px; }
.tools svg { width: 18px; height: 18px; stroke-width: 1.1; }
.tools i { width: 24px; height: 1px; margin: 3px 0 4px; background: #e8e8e8; }
.tools .on { background: #f0f0f0; }
.tools .lock { background: #222; }
.tools .lock svg { stroke: #fff; }
.side { display: flex; flex-direction: column; width: 33px; border-left: 3px solid #ececec; padding: 1px 0; }
.side button { position: relative; height: 30px; }
.side svg { width: 20px; height: 20px; stroke-width: 1; }
.side em { position: absolute; right: 2px; top: 3px; width: 11px; height: 11px; border-radius: 6px; background: #d8224f; color: #fff; font-size: 8px; line-height: 11px; text-align: center; }
.side i { height: 1px; margin: 4px 6px 3px; background: #ddd; }
.side .apps svg { width: 22px; height: 22px; stroke: none; fill: #222; }
.side .apps path { fill: #fff; }
.center { display: flex; flex-direction: column; flex: 1; min-width: 0; }

/* Chart */
.chart { display: flex; flex: 1; min-height: 0; }
.plot { position: relative; flex: 1; min-width: 0; overflow-x: clip; overflow-y: visible; }
.canvas { width: 100%; height: 100%; }
.plot .canvas { overflow: visible; }
.area { stroke: none; }
.hair { stroke: #aaa; stroke-dasharray: 4 4; }
.dot { stroke: #777; stroke-dasharray: 1 1; }
.lvl { stroke: #000; stroke-width: 1.5; }
.bw { stroke: #8fb2e0; }
.bb { stroke: #669ae0; stroke-width: 4; }
.kw { stroke: #444; }
.kb { stroke: #000; stroke-width: 4; }
.red { stroke: #cc2a52; stroke-width: 1.4; }
.blue { stroke: #2d5bc8; stroke-width: 1.4; }
.green { stroke: #245c24; }
.cross { stroke: #111; }
.note { stroke: none; fill: #111; font-size: 13px; font-weight: 700; }
.note svg { stroke: none; }
.lab { stroke: none; fill: #111; font-size: 13px; text-anchor: middle; }
.legend { position: absolute; left: 5px; top: 4px; }
.title { display: flex; align-items: center; height: 14px; white-space: nowrap; color: #444; }
.title .s12 { margin: 0 3px 0 1px; }
.name { font-size: 10px; background: rgba(255,255,255,.5); }
.st { display: flex; align-items: center; width: 26px; height: 11px; margin: 0 5px 0 10px; border-radius: 6px; background: linear-gradient(90deg, #d9f2e8 50%, #fad3df 50%); }
.st i { width: 6px; height: 6px; border-radius: 3px; margin-left: 3px; background: #1f9d69; }
.st b { margin-left: 7px; color: #c72652; font-size: 8px; }
.ohlc { display: flex; gap: 3px; font-size: 9px; background: rgba(255,255,255,.5); }
.ohlc u { text-decoration: none; color: #7b9dcc; }
.deal { display: flex; margin: 4px 0 0 1px; }
.deal button { flex-direction: column; width: 48px; height: 22px; border-radius: 4px; color: #fff; font-size: 7px; line-height: 9px; }
.deal b { font-size: 8px; }
.deal .sell { background: #dc2049; }
.deal .buy { background: #2f62f0; }
.spread { display: flex; flex-direction: column; align-items: center; width: 26px; font-size: 8px; line-height: 12px; }
.spread small { font-size: 7px; line-height: 8px; }
.prices { position: relative; width: 41px; font-size: 8px; padding: 10px 0 1px; }
.scale { display: grid; grid-auto-rows: 1fr; align-items: center; height: 100%; padding-left: 5px; line-height: 10px; }
.chip { position: absolute; left: 0; width: 38px; padding-left: 5px; line-height: 11px; background: #0a0a0a; color: #fff; }
.c1 { top: 87px; background: #dc2049; }
.c2 { top: 138px; }
.c3 { top: 175px; padding-bottom: 1px; line-height: 10px; }
.c4 { top: 226px; }
.c5 { top: 345px; line-height: 15px; }
.c6 { top: 441px; }
.c7 { top: 501px; line-height: 12px; background: #4fbb50; }
.c8 { top: 513px; }
.addp { position: absolute; left: -15px; top: 346px; width: 14px; height: 14px; background: #0a0a0a; border-radius: 2px; }
.addp svg { width: 12px; height: 12px; stroke: #fff; }
.times { display: flex; flex: none; height: 22px; border-bottom: 1px solid #ececec; }
.times .canvas { width: auto; flex: 1; min-width: 0; overflow: hidden; }
.times text { stroke: none; fill: #222; font-size: 8px; text-anchor: middle; }
.times .d { font-weight: 700; }
.times .w { fill: #fff; }
.times button { width: 41px; padding-top: 4px; }
.times button svg, .pset svg { width: 11px; height: 11px; stroke-width: 1.5; }
.ranges { display: flex; align-items: center; flex: none; height: 26px; padding: 0 7px 0 130px; font-size: 9px; gap: 8px; }
.ranges .vs { margin: 0 -1px 0 -2px; }
.cal svg { width: 16px; height: 16px; stroke-width: 1.2; }
.clock { margin-left: auto; }
.panel { flex: none; height: 48px; border-top: 3px solid #e8e8e8; overflow: hidden; }
.phead { display: flex; justify-content: flex-end; align-items: center; gap: 8px; height: 25px; padding-right: 4px; background: #f8f8f8; }
.phead svg { width: 16px; height: 16px; }
.pbody { display: flex; justify-content: space-between; padding: 5px 10px 0 151px; }
.pset { height: 22px; }
.pbody table { border-spacing: 0; font-family: Lato, "Open Sans", sans-serif; font-size: 8px; line-height: 11px; white-space: nowrap; }
.pbody th, .pbody td { padding: 0 0 0 22px; text-align: left; }
.pbody th { color: #000; }
.pbody th svg { display: inline-block; width: 9px; height: 9px; stroke: none; vertical-align: -2px; }
.pbody td.neg { color: #c72652; }

/* Windows taskbar */
.taskbar { display: flex; align-items: center; flex: none; height: 27px; padding-left: 175px; background: linear-gradient(90deg, #262c29 0, #262c29 25%, #3a3532 45%, #3a3431 60%, #262c29 68%); color: #eee; }
.cards { width: 48px; height: 27px; stroke: none; }
.icons { display: grid; grid-template-columns: repeat(12, 1fr); width: 394px; height: 27px; }
.icons svg { width: 18px; height: 18px; stroke: none; }
.icons text, .notif text { font-size: 6px; fill: #fff; stroke: none; text-anchor: middle; }
.icons .run { border-bottom: 1px solid #76b9ed; margin: 0 3px; }
.icons .act { background: #545655; border-bottom: 1px solid #76b9ed; }
.taskbar .news svg { width: 18px; height: 14px; stroke: #ddd; }
.tray { display: flex; gap: 2px; margin: 0 3px 0 14px; }
.tray svg { width: 14px; height: 14px; stroke: #e0e0e0; }
.date { width: 42px; font-size: 8px; line-height: 12px; text-align: center; }
.notif { width: 37px; }
.notif svg { width: 20px; height: 20px; }
.notif text { font-size: 7px; }

/* Weekly stats overlay */
.stats { position: absolute; left: 0; bottom: 0; width: 176px; height: 172px; padding: 8px; background: #e8fde0; font-size: 12px; line-height: 16px; color: #333; white-space: nowrap; }
.stats h1 { margin: 0 0 16px; font-size: 12px; font-weight: 400; text-decoration: underline; }
.stats p { margin: 0 0 16px; }
.stats svg { display: inline-block; width: 16px; height: 16px; stroke: none; vertical-align: -4px; }
```
